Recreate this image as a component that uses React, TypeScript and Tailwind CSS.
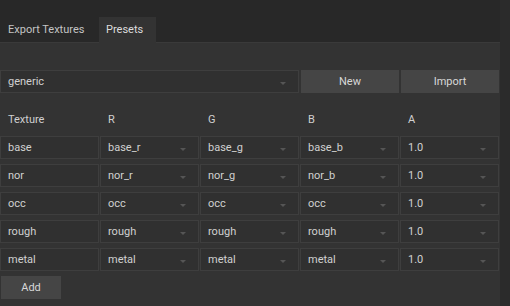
import React from 'react'

const ROWS = [
  { tex: 'base', r: 'base_r', g: 'base_g', b: 'base_b', a: '1.0' },
  { tex: 'nor', r: 'nor_r', g: 'nor_g', b: 'nor_b', a: '1.0' },
  { tex: 'occ', r: 'occ', g: 'occ', b: 'occ', a: '1.0' },
  { tex: 'rough', r: 'rough', g: 'rough', b: 'rough', a: '1.0' },
  { tex: 'metal', r: 'metal', g: 'metal', b: 'metal', a: '1.0' },
]

function Arrow() {
  return (
    <svg width="6" height="3" viewBox="0 0 6 3" className="absolute right-[12px] top-[11px]">
      <path d="M0 0 L6 0 L3 3 Z" fill="#555555" />
    </svg>
  )
}

function Cell({ value, select }: { value: string; select?: boolean }) {
  return (
    <div className="relative h-[23px] border border-[#3e3e3e] bg-[#303030] pl-[7px] pt-px flex items-center">
      <span>{value}</span>
      {select && <Arrow />}
    </div>
  )
}

export default function App() {
  return (
    <div
      className="w-[510px] h-[306px] flex bg-[#333333] text-[#d0d0d0] text-[11px] overflow-hidden"
      style={{ fontFamily: 'Roboto, "Noto Sans", sans-serif' }}
    >
      <div className="w-[500px] flex flex-col">
        {/* tab bar */}
        <div className="h-[43px] bg-[#282828] flex items-end border-b border-[#3a3a3a]">
          <div className="h-[25px] w-[99px] pl-[8px] pt-px flex items-center text-[#c4c4c4]">Export Textures</div>
          <div className="h-[26px] w-[57px] -mb-px pl-[7px] flex items-center bg-[#333333] text-[#dcdcdc]">Presets</div>
        </div>

        <div className="pt-[27px] flex flex-col">
          <div className="flex gap-[2px]">
            <div className="w-[299px]">
              <Cell value="generic" select />
            </div>
            <button className="w-[98px] h-[23px] pt-px bg-[#454545] text-[#d8d8d8]">New</button>
            <button className="w-[98px] h-[23px] pt-px bg-[#454545] text-[#d8d8d8]">Import</button>
          </div>

          <div className="mt-[15px] grid grid-cols-[99px_99px_99px_99px_99px] gap-x-px gap-y-[5px]">
            {['Texture', 'R', 'G', 'B', 'A'].map(h => (
              <div key={h} className="h-[23px] pl-[8px] pt-px flex items-center">{h}</div>
            ))}
            {ROWS.map(row => (
              <React.Fragment key={row.tex}>
                <Cell value={row.tex} />
                <Cell value={row.r} select />
                <Cell value={row.g} select />
                <Cell value={row.b} select />
                <Cell value={row.a} select />
              </React.Fragment>
            ))}
          </div>

          <div className="mt-[5px] pl-px">
            <button className="w-[60px] h-[23px] pt-px bg-[#454545] text-[#d8d8d8]">Add</button>
          </div>
        </div>
      </div>
      <div className="w-[10px] bg-[#2b2b2b]" />
    </div>
  )
}
